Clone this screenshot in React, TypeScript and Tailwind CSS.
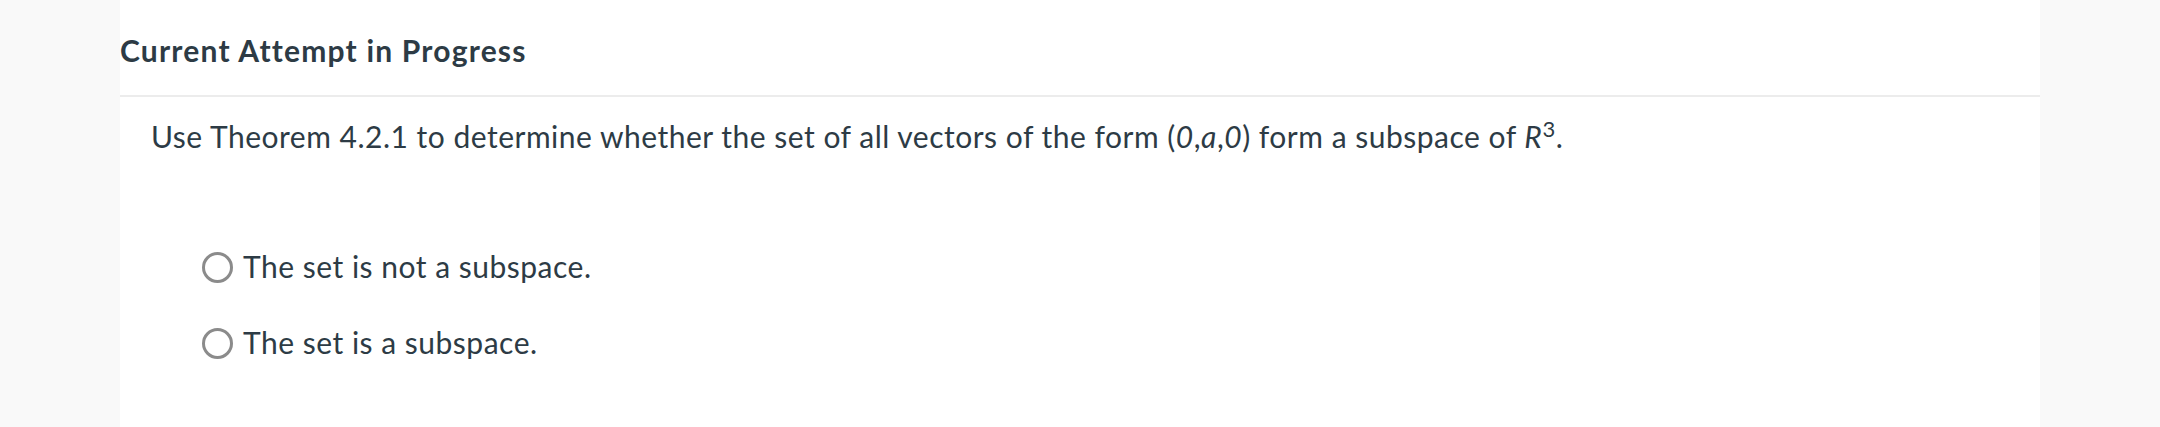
import React from "react";

function Radio() {
  return (
    <span className="mt-[3px] box-border inline-block h-[31px] w-[31px] shrink-0 rounded-full border-[3px] border-[#8b8b8b] bg-white" />
  );
}

export default function App() {
  const options = ["The set is not a subspace.", "The set is a subspace."];
  return (
    <div
      className="min-h-[427px] bg-[#f9f9f9] px-[120px] text-[#2d3b45]"
      style={{ fontFamily: "Lato, 'Open Sans', sans-serif" }}
    >
      <div className="min-h-[427px] bg-white">
        <div className="h-[95px] pt-[32px]">
          <h2 className="text-[30px] font-bold leading-[36px] tracking-[1.2px]">Current Attempt in Progress</h2>
        </div>
        <div className="h-[2px] bg-[#ececec]" />
        <div className="pl-[31px] pt-[21px]">
          <p className="text-[30px] leading-[36px] tracking-[0.5px]">
            Use Theorem 4.2.1 to determine whether the set of all vectors of the form (<i>0</i>,<i>a</i>,<i>0</i>) form a
            subspace of <i>R</i>
            <sup className="text-[22px]">3</sup>.
          </p>
          <div className="mt-[94px] flex flex-col gap-[40px] pl-[51px]">
            {options.map((o) => (
              <label key={o} className="flex items-center gap-[10px]">
                <Radio />
                <span className="text-[30px] leading-[36px] tracking-[0.5px]">{o}</span>
              </label>
            ))}
          </div>
        </div>
      </div>
    </div>
  );
}
